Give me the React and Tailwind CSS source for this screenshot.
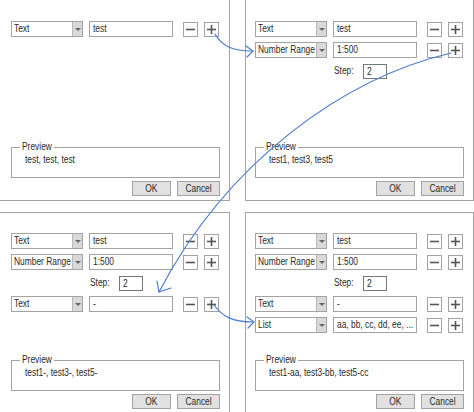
import React from "react";

// the mockup font is a condensed Arial; squeeze Liberation Sans to match
const T = ({ children, center }) => (
  <span className={`inline-block whitespace-nowrap scale-x-[0.84] ${center ? "origin-center" : "origin-left"}`}>
    {children}
  </span>
);

const Select = ({ label }) => (
  <div className="flex h-[16px] w-[72px] shrink-0 border border-[#a3a3a3] bg-white">
    <span className="flex-1 overflow-hidden whitespace-nowrap pl-[2px] leading-[14px]">
      <T>{label}</T>
    </span>
    <span className="flex w-[10px] items-center justify-center border-l border-[#b8b8b8] bg-[#d9d9d9]">
      <span className="h-0 w-0 border-x-[3px] border-t-[3px] border-x-transparent border-t-[#666]" />
    </span>
  </div>
);

const Field = ({ value }) => (
  <div className="ml-[6px] h-[16px] w-[84px] shrink-0 overflow-hidden whitespace-nowrap border border-[#a3a3a3] bg-white pl-[3px] leading-[14px]">
    <T>{value}</T>
  </div>
);

const IconBtn = ({ plus }) => (
  <div className="flex h-[15px] w-[15px] items-center justify-center border border-[#a3a3a3] bg-white">
    <svg width="11" height="11" viewBox="0 0 11 11">
      <path d="M1 5.5h9" stroke="#555" strokeWidth="1.6" />
      {plus && <path d="M5.5 1v9" stroke="#555" strokeWidth="1.6" />}
    </svg>
  </div>
);

const Row = ({ type, value }) => (
  <div className="flex h-[16px] items-center">
    <Select label={type} />
    <Field value={value} />
    <div className="ml-[10px] flex gap-[6px]">
      <IconBtn />
      <IconBtn plus />
    </div>
  </div>
);

const StepRow = () => (
  <div className="flex h-[16px] items-center">
    <span className="ml-[79px] w-[29px] leading-[14px]">
      <T>Step:</T>
    </span>
    <div className="h-[15px] w-[24px] border border-[#777] bg-white pl-[3px] leading-[13px]">
      <T>2</T>
    </div>
  </div>
);

const Panel = ({ className, preview, children }) => (
  <div className={`flex h-[201px] flex-col border-[#a3a3a3] bg-white ${className}`}>
    <div className="flex flex-col gap-[5px]">{children}</div>
    <div className="mt-auto">
      <div className="relative h-[31px] border border-[#a3a3a3] pl-[13px] pt-[6px] leading-[12px]">
        <span className="absolute -top-[7px] left-[8px] w-[34px] bg-white px-[2px] leading-[12px]">
          <T>Preview</T>
        </span>
        <T>{preview}</T>
      </div>
      <div className="mb-[4px] mt-[3px] flex justify-end gap-[6px]">
        <button className="h-[15px] w-[39px] border border-[#a3a3a3] bg-[#e1e1e1] leading-[13px]">
          <T center>OK</T>
        </button>
        <button className="h-[15px] w-[43px] border border-[#a3a3a3] bg-[#e1e1e1] leading-[13px]">
          <T center>Cancel</T>
        </button>
      </div>
    </div>
  </div>
);

const Arrows = () => (
  <svg className="pointer-events-none absolute left-0 top-0" width="474" height="412" viewBox="0 0 474 412" fill="none">
    <g stroke="#4a7bd0" strokeWidth="1.2" strokeLinecap="round" strokeLinejoin="round">
      <path d="M215 34 C222 46, 232 51, 252 51" />
      <polyline points="246,46 253,51 247,57" />
      <path d="M451 53 C345 78, 228 160, 159 292" />
      <polyline points="157,281 159,292 171,288" />
      <path d="M214 305 C222 316, 232 322, 253 322" />
      <polyline points="247,317 254,322 248,328" />
    </g>
  </svg>
);

export default function App() {
  return (
    <div className="relative h-[412px] w-[474px] overflow-hidden bg-white font-['Liberation_Sans',Arial,sans-serif] text-[10px] text-[#2a2a2a]">
      <div className="grid grid-cols-[230px_229px] grid-rows-[201px_201px] gap-x-[15px] gap-y-[11px]">
        <Panel className="border-b border-r pl-[11px] pr-[9px] pt-[21px]" preview="test, test, test">
          <Row type="Text" value="test" />
        </Panel>
        <Panel className="border-b border-l border-r pl-[9px] pr-[9px] pt-[21px]" preview="test1, test3, test5">
          <Row type="Text" value="test" />
          <Row type="Number Range" value="1:500" />
          <StepRow />
        </Panel>
        <Panel className="border-r border-t pl-[11px] pr-[9px] pt-[20px]" preview="test1-, test3-, test5-">
          <Row type="Text" value="test" />
          <Row type="Number Range" value="1:500" />
          <StepRow />
          <Row type="Text" value="-" />
        </Panel>
        <Panel className="border-l border-r border-t pl-[9px] pr-[9px] pt-[20px]" preview="test1-aa, test3-bb, test5-cc">
          <Row type="Text" value="test" />
          <Row type="Number Range" value="1:500" />
          <StepRow />
          <Row type="Text" value="-" />
          <Row type="List" value="aa, bb, cc, dd, ee, ..." />
        </Panel>
      </div>
      <Arrows />
    </div>
  );
}
